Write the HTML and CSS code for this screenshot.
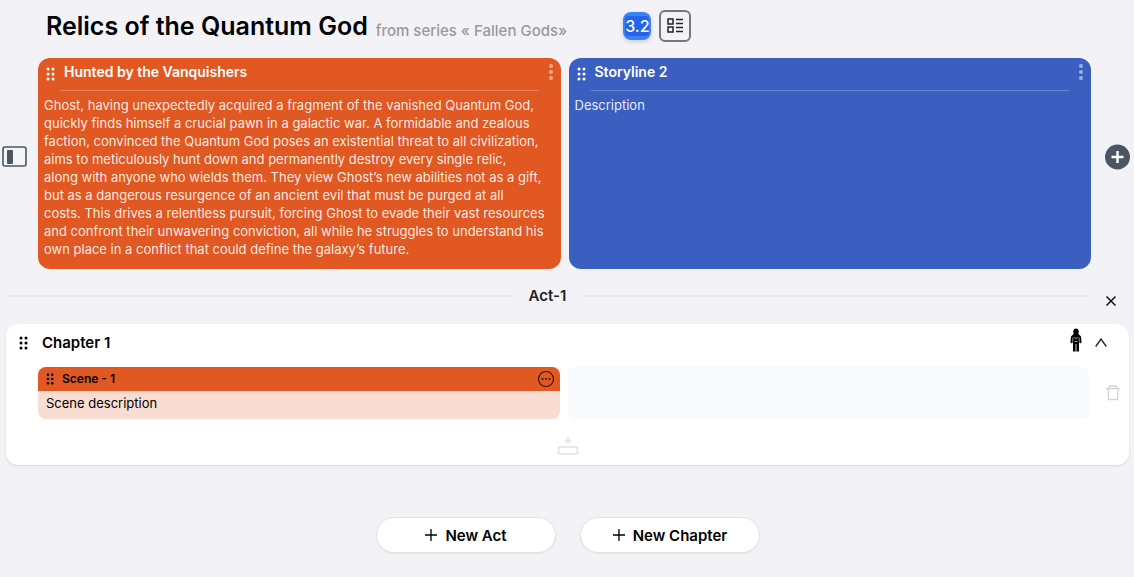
FILE: index.html
```html
<!DOCTYPE html>
<html lang="en">
<head>
  <meta charset="UTF-8">
  <meta name="viewport" content="width=device-width, initial-scale=1.0">
  <title>Relics of the Quantum God</title>
  <link rel="stylesheet" href="styles.css">
</head>
<body>
  <svg class="defs" aria-hidden="true">
    <symbol id="drag" viewBox="0 0 10 14">
      <circle cx="2" cy="2" r="1.5"/><circle cx="7" cy="2" r="1.5"/>
      <circle cx="2" cy="7" r="1.5"/><circle cx="7" cy="7" r="1.5"/>
      <circle cx="2" cy="12" r="1.5"/><circle cx="7" cy="12" r="1.5"/>
    </symbol>
    <symbol id="dots" viewBox="0 0 6 16">
      <circle cx="3" cy="2" r="2"/><circle cx="3" cy="8" r="2"/><circle cx="3" cy="14" r="2"/>
    </symbol>
    <symbol id="plus" viewBox="0 0 12 12">
      <path d="M6 0v12M0 6h12" fill="none" stroke="currentColor" stroke-width="1.3"/>
    </symbol>
  </svg>

  <header class="page-header">
    <h1>Relics of the Quantum God</h1>
    <span class="series">from series « Fallen Gods»</span>
    <div class="tools">
      <button class="version"><span>3.2</span></button>
      <button class="view-btn" aria-label="View">
        <svg width="16" height="16" viewBox="0 0 16 16" fill="none" stroke="#222" stroke-width="1.5">
          <rect x="1" y="1" width="5" height="5"/><rect x="1" y="9" width="5" height="5"/>
          <path d="M9 1.5h7M9 5.5h7M9 9.5h7M9 13.5h7"/>
        </svg>
      </button>
    </div>
  </header>

  <section class="storylines">
    <button class="icon-btn side-btn" aria-label="Toggle sidebar">
      <svg width="26" height="22" viewBox="0 0 26 22">
        <rect x="1" y="1" width="23" height="19" rx="2" fill="#f3f4f6" stroke="#4b5563" stroke-width="1.6"/>
        <rect x="5" y="4" width="6" height="14" rx="1" fill="#4b5563"/>
      </svg>
    </button>
    <article class="story orange">
      <div class="story-head">
        <svg class="drag"><use href="#drag"/></svg>
        <h2>Hunted by the Vanquishers</h2>
        <button class="menu" aria-label="Storyline menu"><svg><use href="#dots"/></svg></button>
      </div>
      <p>Ghost, having unexpectedly acquired a fragment of the vanished Quantum God,<br>
        quickly finds himself a crucial pawn in a galactic war. A formidable and zealous<br>
        faction, convinced the Quantum God poses an existential threat to all civilization,<br>
        aims to meticulously hunt down and permanently destroy every single relic,<br>
        along with anyone who wields them. They view Ghost’s new abilities not as a gift,<br>
        but as a dangerous resurgence of an ancient evil that must be purged at all<br>
        costs. This drives a relentless pursuit, forcing Ghost to evade their vast resources<br>
        and confront their unwavering conviction, all while he struggles to understand his<br>
        own place in a conflict that could define the galaxy’s future.</p>
    </article>
    <article class="story blue">
      <div class="story-head">
        <svg class="drag"><use href="#drag"/></svg>
        <h2>Storyline 2</h2>
        <button class="menu" aria-label="Storyline menu"><svg><use href="#dots"/></svg></button>
      </div>
      <p>Description</p>
    </article>
    <button class="icon-btn side-btn" aria-label="Add storyline">
      <svg width="26" height="26" viewBox="0 0 26 26">
        <circle cx="13.5" cy="13" r="12.5" fill="#4b5563"/>
        <path d="M13.5 7v12M7.5 13h12" stroke="#fff" stroke-width="2.4"/>
      </svg>
    </button>
  </section>

  <div class="act">
    <div class="act-title"><h2>Act-1</h2></div>
    <button class="icon-btn act-close" aria-label="Delete act">
      <svg width="12" height="12" viewBox="0 0 12 12"><path d="M1.5 1.5l9 9M10.5 1.5l-9 9" stroke="#111" stroke-width="1.5"/></svg>
    </button>
  </div>

  <section class="chapter">
    <div class="chapter-head">
      <svg class="drag"><use href="#drag"/></svg>
      <h3>Chapter 1</h3>
      <button class="icon-btn character" aria-label="Characters">
        <svg width="12" height="24" viewBox="0 0 12 24">
          <circle cx="6" cy="3" r="2.6"/>
          <path d="M3.5 3h5v4h-5z"/>
          <path d="M3 6.5h6l2 2 .6 6-1.6 1-1-2v10H6.4V16h-.8v7.5H3v-10l-1 2-1.6-1 .6-6z"/>
          <path d="M2.8 9.5v4M9.2 9.5v4M4 9.5l2 1 2-1M4.5 13.5h3" fill="none" stroke="#fff" stroke-width=".6"/>
        </svg>
      </button>
      <button class="icon-btn" aria-label="Collapse chapter">
        <svg width="12" height="10" viewBox="0 0 12 10"><path d="M.7 8.5L6 1l5.3 7.5" fill="none" stroke="#222" stroke-width="1.3"/></svg>
      </button>
    </div>
    <div class="scenes">
      <article class="scene">
        <div class="scene-head">
          <svg class="drag"><use href="#drag"/></svg>
          <h4>Scene - 1</h4>
          <button class="icon-btn" aria-label="Scene menu">
            <svg width="18" height="18" viewBox="0 0 18 18">
              <circle cx="9" cy="9" r="7.5" fill="none" stroke="#3b1509" stroke-width="1.2"/>
              <circle cx="5.5" cy="9" r="1.1" fill="#3b1509"/><circle cx="9" cy="9" r="1.1" fill="#3b1509"/><circle cx="12.5" cy="9" r="1.1" fill="#3b1509"/>
            </svg>
          </button>
        </div>
        <p>Scene description</p>
      </article>
      <div class="empty-scene"></div>
      <button class="icon-btn" aria-label="Delete row">
        <svg width="14" height="16" viewBox="0 0 14 16" fill="none" stroke="#d1d5db" stroke-width="1.3">
          <path d="M0 3.5h14M3.5 3.5V1h7v2.5M2 3.500l.5 11h9l.5-11"/>
        </svg>
      </button>
    </div>
    <button class="icon-btn add-row" aria-label="Add row">
      <svg width="22" height="20" viewBox="0 0 22 20" fill="none" stroke="#e5e7eb" stroke-width="2">
        <path d="M11 1v7M7.5 4.5h7"/><rect x="1.5" y="11" width="19" height="7" rx="1"/>
      </svg>
    </button>
  </section>

  <footer class="actions">
    <button><svg><use href="#plus"/></svg>New Act</button>
    <button><svg><use href="#plus"/></svg>New Chapter</button>
  </footer>
</body>
</html>
```

FILE: styles.css
```css
* {
  box-sizing: border-box;
}

body, h1, h2, h3, h4, p {
  margin: 0;
}

body {
  font-family: Inter, "Open Sans", sans-serif;
  background-color: #f3f2f7;
  color: #000;
  font-size: 13px;
  line-height: 18px;
}

button {
  font-family: inherit;
  padding: 0;
  border: none;
  background: none;
  cursor: pointer;
}

svg {
  display: block;
  flex-shrink: 0;
}

.defs {
  display: none;
}

.icon-btn {
  display: flex;
  align-items: center;
  justify-content: center;
}

.drag {
  width: 10px;
  height: 14px;
  fill: currentColor;
}

/* Header */
.page-header {
  display: flex;
  align-items: flex-start;
  height: 58px;
  padding: 10px 0 0 46px;
  white-space: nowrap;
}

h1 {
  font-size: 25px;
  line-height: 32px;
  font-weight: 600;
}

.series {
  margin-left: 8px;
  padding-top: 12px;
  font-size: 15px;
  font-weight: 500;
  color: #999;
}

.tools {
  display: flex;
  align-items: center;
  gap: 8px;
  margin-left: 56px;
}

.version {
  width: 28px;
  height: 28px;
  padding: 4px 0;
  border-radius: 8px;
  background-color: #3b82f6;
  box-shadow: 0 2px 4px rgba(0, 0, 0, 0.15);
  color: #fff;
  font-size: 16px;
  font-weight: 500;
  line-height: 20px;
}

.version span {
  display: block;
  margin: 0 2px;
  border-radius: 4px;
  background-color: #2563eb;
}

.view-btn {
  display: flex;
  align-items: center;
  justify-content: center;
  width: 32px;
  height: 32px;
  border: 2px solid #777;
  border-radius: 6px;
}

/* Storylines */
.storylines {
  display: grid;
  grid-template-columns: 30px 1fr 1fr 35px;
  gap: 8px;
  align-items: stretch;
}

.side-btn {
  padding-bottom: 14px;
}

.story {
  min-width: 0;
  padding-bottom: 11px;
  border-radius: 12px;
  color: #fff;
}

.orange {
  background-color: #e25822;
}

.blue {
  background-color: #3a5fc0;
}

.story-head {
  display: flex;
  align-items: center;
  height: 32px;
  padding: 0 7px 4px 8px;
  gap: 8px;
}

.story-head .drag {
  margin-top: 4px;
}

.story-head h2 {
  flex: 1;
  font-size: 14px;
  font-weight: 600;
}

.menu {
  color: rgba(255, 255, 255, 0.5);
}

.menu svg {
  width: 6px;
  height: 16px;
  fill: currentColor;
}

.story p {
  position: relative;
  padding: 6px 0 0 6px;
  color: rgba(255, 255, 255, 0.9);
  white-space: nowrap;
}

.story p::before {
  content: "";
  position: absolute;
  top: 0;
  left: 22px;
  right: 22px;
  height: 1px;
  background-color: rgba(255, 255, 255, 0.25);
}

/* Act */
.act {
  display: flex;
  height: 55px;
  padding-left: 6px;
}

.act-title {
  display: flex;
  flex: 1;
  align-items: center;
  gap: 16px;
  height: 53px;
}

.act-title::before,
.act-title::after {
  content: "";
  flex: 1;
  height: 2px;
  background-color: #e9e9ee;
}

.act h2 {
  font-size: 15px;
  font-weight: 600;
  color: #1f1f24;
}

.act-close {
  width: 45px;
  padding: 9px 2px 0 0;
}

/* Chapter */
.chapter {
  margin: 0 5px 0 6px;
  height: 141px;
  border-radius: 12px;
  background-color: #fff;
  box-shadow: 0 1px 2px rgba(0, 0, 0, 0.12);
}

.chapter-head {
  display: flex;
  align-items: center;
  height: 43px;
  padding: 0 22px 6px 13px;
  gap: 13px;
}

.chapter-head h3 {
  flex: 1;
  font-size: 15px;
  font-weight: 600;
}

.character {
  padding-bottom: 6px;
}

.scenes {
  display: grid;
  grid-template-columns: 1fr 1fr 32px;
  gap: 8px;
  height: 52px;
  padding-left: 32px;
}

.scene {
  overflow: hidden;
  border-radius: 8px;
  background-color: #f9ddd2;
}

.scene-head {
  display: flex;
  align-items: center;
  gap: 7px;
  height: 24px;
  padding: 0 5px 0 8px;
  background-color: #e25822;
}

.scene-head .drag {
  width: 9px;
  height: 12px;
}

.scene-head h4 {
  flex: 1;
  font-size: 12px;
  font-weight: 600;
}

.scene p {
  padding: 3px 8px;
}

.empty-scene {
  border-radius: 6px;
  background-color: #f9fafc;
}

.add-row {
  width: 100%;
  padding-top: 17px;
}

/* Bottom buttons */
.actions {
  display: flex;
  justify-content: center;
  gap: 24px;
  padding: 52px 0 24px 2px;
}

.actions button {
  display: flex;
  align-items: center;
  justify-content: center;
  gap: 8px;
  width: 180px;
  height: 36px;
  border: 1px solid #e2e2e2;
  border-radius: 18px;
  background-color: #fff;
  color: #000;
  font-size: 15px;
  font-weight: 600;
  box-shadow: 0 1px 2px rgba(0, 0, 0, 0.05);
}

.actions svg {
  width: 12px;
  height: 12px;
}
```
